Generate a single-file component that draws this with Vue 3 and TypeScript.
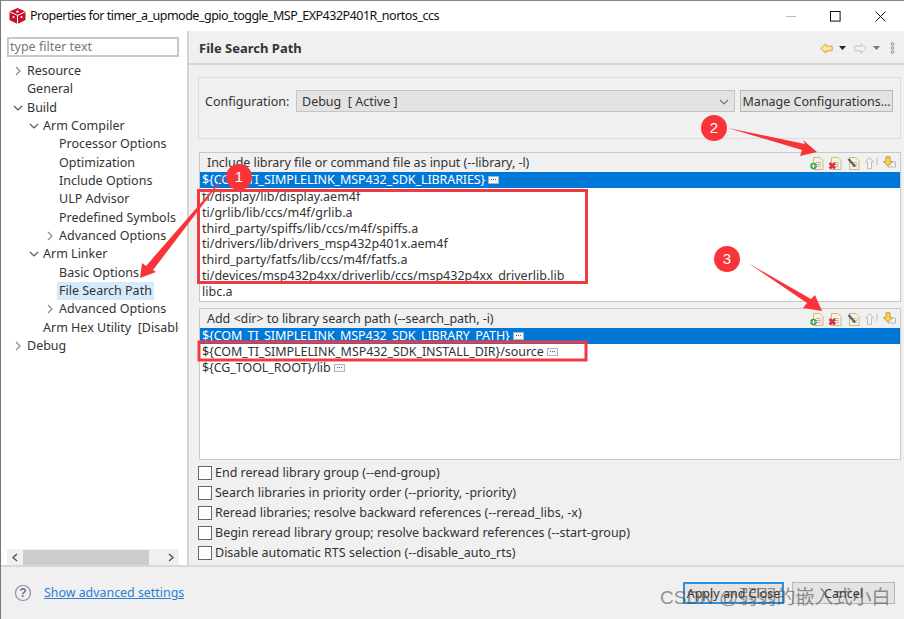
<script setup lang="ts">
interface TreeRow { label: string; depth: number; arrow?: 'right' | 'down'; selected?: boolean }
const tree: TreeRow[] = [
  { label: 'Resource', depth: 0, arrow: 'right' },
  { label: 'General', depth: 0 },
  { label: 'Build', depth: 0, arrow: 'down' },
  { label: 'Arm Compiler', depth: 1, arrow: 'down' },
  { label: 'Processor Options', depth: 2 },
  { label: 'Optimization', depth: 2 },
  { label: 'Include Options', depth: 2 },
  { label: 'ULP Advisor', depth: 2 },
  { label: 'Predefined Symbols', depth: 2 },
  { label: 'Advanced Options', depth: 2, arrow: 'right' },
  { label: 'Arm Linker', depth: 1, arrow: 'down' },
  { label: 'Basic Options', depth: 2 },
  { label: 'File Search Path', depth: 2, selected: true },
  { label: 'Advanced Options', depth: 2, arrow: 'right' },
  { label: 'Arm Hex Utility  [Disabled]', depth: 1 },
  { label: 'Debug', depth: 0, arrow: 'right' },
]
const libs = [
  'ti/display/lib/display.aem4f',
  'ti/grlib/lib/ccs/m4f/grlib.a',
  'third_party/spiffs/lib/ccs/m4f/spiffs.a',
  'ti/drivers/lib/drivers_msp432p401x.aem4f',
  'third_party/fatfs/lib/ccs/m4f/fatfs.a',
  'ti/devices/msp432p4xx/driverlib/ccs/msp432p4xx_driverlib.lib',
  'libc.a',
]
const checks = [
  'End reread library group (--end-group)',
  'Search libraries in priority order (--priority, -priority)',
  'Reread libraries; resolve backward references (--reread_libs, -x)',
  'Begin reread library group; resolve backward references (--start-group)',
  'Disable automatic RTS selection (--disable_auto_rts)',
]
const tools = ['add', 'del', 'edit', 'up', 'down']
const sections = [
  {
    cls: 'box1',
    head: 'Include library file or command file as input (--library, -l)',
    sel: '${COM_TI_SIMPLELINK_MSP432_SDK_LIBRARIES}',
    vars: [] as string[],
    plain: libs,
  },
  {
    cls: 'box2',
    head: 'Add <dir> to library search path (--search_path, -i)',
    sel: '${COM_TI_SIMPLELINK_MSP432_SDK_LIBRARY_PATH}',
    vars: ['${COM_TI_SIMPLELINK_MSP432_SDK_INSTALL_DIR}/source', '${CG_TOOL_ROOT}/lib'],
    plain: [] as string[],
  },
]
</script>

<template>
  <div class="win">
    <header class="titlebar">
      <svg class="logo" width="17" height="16" viewBox="0 0 17 16">
        <path d="M8.5 0 16.5 3.6V12L8.5 16 .5 12V3.6Z" fill="#c8102e" />
        <path d="M.8 3.8 8.5 7.4 16.2 3.8M8.5 7.4V16" stroke="#fff" stroke-width="1" fill="none" />
        <circle cx="8.5" cy="3.6" r="1.2" fill="#fff" />
        <circle cx="4.5" cy="9" r="1" fill="#fff" />
        <circle cx="12.5" cy="9" r="1" fill="#fff" />
      </svg>
      <span class="title">Properties for timer_a_upmode_gpio_toggle_MSP_EXP432P401R_nortos_ccs</span>
      <span class="spacer"></span>
      <span class="wbtn min"></span>
      <span class="wbtn"><svg width="11" height="11" viewBox="0 0 11 11"><rect x=".5" y=".5" width="9.6" height="9.6" fill="none" stroke="#111" /></svg></span>
      <span class="wbtn"><svg width="11" height="11" viewBox="0 0 11 11"><path d="M.5.5 10.5 10.5M10.5.5.5 10.5" stroke="#111" /></svg></span>
    </header>

    <div class="body">
      <aside class="side">
        <div class="filter">type filter text</div>
        <ul class="tree">
          <li v-for="(r, i) in tree" :key="i" class="node" :class="'d' + r.depth">
            <svg v-if="r.arrow" class="twist" width="10" height="10" viewBox="0 0 10 10">
              <path v-if="r.arrow === 'right'" d="M3 1 7 5 3 9" fill="none" stroke="#8a8a8a" stroke-width="1.2" />
              <path v-else d="M1 3 5 7 9 3" fill="none" stroke="#555" stroke-width="1.2" />
            </svg>
            <span class="nlabel" :class="{ sel: r.selected }">{{ r.label }}</span>
          </li>
        </ul>
        <div class="hscroll">
          <svg width="16" height="15" viewBox="0 0 16 15"><path d="M10 4 6 7.5 10 11" fill="none" stroke="#555" stroke-width="1.4" /></svg>
          <span class="thumb"></span>
          <svg width="16" height="15" viewBox="0 0 16 15"><path d="M6 4 10 7.5 6 11" fill="none" stroke="#555" stroke-width="1.4" /></svg>
        </div>
      </aside>

      <main class="main">
        <div class="pagehead">
          <h1>File Search Path</h1>
          <div class="nav">
            <svg width="13" height="11" viewBox="0 0 13 11"><path d="M.8 5.5 6 .8V3.2H12.2V7.8H6V10.2Z" fill="#fbe3a4" stroke="#d9a338" /></svg>
            <svg class="nav-drop" width="7" height="4" viewBox="0 0 7 4"><path d="M0 0H7L3.5 4Z" fill="#222" /></svg>
            <svg class="nav-fwd" width="13" height="11" viewBox="0 0 13 11"><path d="M12.2 5.5 7 .8V3.2H.8V7.8H7V10.2Z" fill="#f4f4f4" stroke="#c4c4c4" /></svg>
            <svg class="nav-drop" width="7" height="4" viewBox="0 0 7 4"><path d="M0 0H7L3.5 4Z" fill="#777" /></svg>
            <svg class="nav-menu" width="5" height="12" viewBox="0 0 5 12"><g fill="#ddd" stroke="#999"><circle cx="2.5" cy="2" r="1.4" /><circle cx="2.5" cy="6" r="1.4" /><circle cx="2.5" cy="10" r="1.4" /></g></svg>
          </div>
        </div>

        <div class="content">
          <section class="config">
            <span>Configuration:</span>
            <div class="combo">
              <span>Debug&nbsp;&nbsp;[ Active ]</span>
              <svg width="10" height="6" viewBox="0 0 10 6"><path d="M1 1 5 5 9 1" fill="none" stroke="#777" stroke-width="1.2" /></svg>
            </div>
            <button class="btn manage">Manage Configurations...</button>
          </section>

          <section v-for="s in sections" :key="s.cls" class="box" :class="s.cls">
            <div class="boxhead">
              <span>{{ s.head }}</span>
              <div class="tools">
                <svg v-for="k in tools" :key="k" width="14" height="14" viewBox="0 0 14 14">
                  <template v-if="k === 'add' || k === 'del' || k === 'edit'">
                    <path d="M3.5 1.5H10L13 4.5V13.5H3.5Z" fill="#fbf1d6" stroke="#cdb985" />
                    <path d="M6 6.5H11M6 8.5H11M6 10.5H11" stroke="#a9bdd2" />
                  </template>
                  <g v-if="k === 'add'"><circle cx="3.5" cy="10" r="3.2" fill="#3d9a4a" /><path d="M1.5 10H5.500M3.5 8V12" stroke="#fff" /></g>
                  <path v-if="k === 'del'" d="M1.5 7 7 12.500M7 7 1.5 12.500" stroke="#e0303f" stroke-width="2.8" />
                  <path v-if="k === 'edit'" d="M2.5 3 9 10.500" stroke="#5a5f68" stroke-width="2.2" />
                  <g v-if="k === 'up'"><path d="M5.5 1.5 9.5 6H7.500V12.500H3.5V6H1.5Z" fill="#f2f2f2" stroke="#bdbdbd" /><path d="M13 2V9" stroke="#bbb" /></g>
                  <g v-if="k === 'down'"><path d="M6 11H13.5V6H8" fill="#eef3f8" stroke="#a9bdd2" /><path d="M4 .8H8V5.5H10.500L6 10.500 1.5 5.5H4Z" fill="#f6cf5e" stroke="#d09a28" /></g>
                </svg>
              </div>
            </div>
            <div class="row sel"><span>{{ s.sel }}</span><i class="dots"></i></div>
            <div v-for="v in s.vars" :key="v" class="row"><span class="var">{{ v }}</span><i class="dots"></i></div>
            <div v-for="l in s.plain" :key="l" class="row">{{ l }}</div>
          </section>

          <div class="checks">
            <label v-for="c in checks" :key="c" class="check"><i class="cbox"></i>{{ c }}</label>
          </div>
        </div>
      </main>
    </div>

    <footer class="foot">
      <svg width="18" height="18" viewBox="0 0 18 18"><circle cx="9" cy="9" r="7.5" fill="none" stroke="#8090a8" stroke-width="1.2" /><text x="9" y="13" text-anchor="middle" font-size="12" font-family="Liberation Sans" font-weight="700" fill="#6a7385">?</text></svg>
      <a class="link">Show advanced settings</a>
      <span class="spacer"></span>
      <button class="btn apply">Apply and Close</button>
      <button class="btn cancel">Cancel</button>
    </footer>

    <svg class="marks" width="904" height="619" viewBox="0 0 904 619">
      <g fill="none" stroke="#ef3a40" stroke-width="3">
        <rect x="198.5" y="190.5" width="388" height="92" />
        <rect x="199" y="342" width="387" height="18" />
      </g>
      <g fill="#f9333a">
        <path d="M227 173 153 270 156 272 140 278 142 263 146 266Z" />
        <path d="M728 128 805 144 803 140 817 152 800 156 802 150Z" />
        <path d="M748 263 811 299 815 295 822 311 803 308 807 303Z" />
        <circle cx="239" cy="177" r="13" />
        <circle cx="714" cy="128" r="13" />
        <circle cx="727" cy="259" r="13" />
      </g>
      <g fill="#fff" font-family="Liberation Sans, sans-serif" font-size="15" text-anchor="middle">
        <text x="239" y="182">1</text>
        <text x="714" y="133">2</text>
        <text x="727" y="264">3</text>
      </g>
    </svg>
    <div class="wm">CSDN @弱弱的嵌入式小白</div>
  </div>
</template>

<style>
html, body { margin: 0; background: #f0f0f0; }
</style>

<style scoped>
.win { position: relative; width: 904px; height: 619px; overflow: hidden; box-sizing: border-box; border-left: 1px solid #777; border-top: 1px solid #888; display: flex; flex-direction: column; background: #f0f0f0; color: #333; font: 12.5px/16px "Noto Sans", "Noto Sans CJK SC", sans-serif; }
.titlebar { height: 30px; flex: none; background: #fff; display: flex; align-items: center; padding: 0 1px 0 8px; color: #111; }
.logo { margin-right: 4px; }
.title { letter-spacing: -.5px; font-size: 12.5px; white-space: nowrap; }
.spacer { flex: 1; }
.wbtn { width: 45px; height: 30px; display: flex; align-items: center; justify-content: center; }
.wbtn.min::after { content: ""; width: 10px; height: 1px; background: #bbb; }
.body { flex: 1; min-height: 0; display: flex; }
.side { flex: none; background: #fff; border-right: 2px solid #d4d4d4; padding: 6px 8px 0 6px; box-sizing: border-box; width: 188px; display: flex; flex-direction: column; }
.filter { height: 20px; box-sizing: border-box; border: 2px solid #c8c8c8; padding-left: 1px; line-height: 16px; color: #777; font-size: 12.5px; }
.tree { list-style: none; margin: 5px 0 0; padding: 0; flex: 1; overflow: hidden; }
.node { position: relative; height: 18.33px; line-height: 18px; white-space: pre; }
.d0 { padding-left: 20px; }
.d1 { padding-left: 36px; }
.d2 { padding-left: 52px; }
.twist { position: absolute; top: 4px; }
.d0 .twist { left: 6px; }
.d1 .twist { left: 22px; }
.d2 .twist { left: 38px; }
.nlabel { display: inline-block; height: 18px; }
.nlabel.sel { background: #d5ebfb; margin-left: -2px; padding: 0 2px; }
.hscroll { height: 16px; flex: none; background: #f0f0f0; display: flex; align-items: center; }
.thumb { width: 126px; height: 15px; background: #cdcdcd; }
.hscroll svg:last-child { margin-left: auto; }
.main { flex: 1; min-width: 0; display: flex; flex-direction: column; }
.pagehead { height: 30px; padding: 2px 9px 0 10px; flex: none; border-bottom: 2px solid #d4d4d4; display: flex; align-items: center; justify-content: space-between; }
.pagehead h1 { font-size: 13px; margin: 0; font-weight: 700; color: #333; }
.nav { display: flex; align-items: center; }
.nav-drop { margin-left: 6px; }
.nav-fwd { margin-left: 8px; }
.nav-menu { margin-left: 10px; }
.content { padding: 12px 3px 0 9px; flex: 1; min-height: 0; }
.config { height: 62px; box-sizing: border-box; border: 1px solid #dcdcdc; padding: 12px 7px 0 6px; display: flex; align-items: flex-start; }
.config > span { width: 91px; flex: none; line-height: 23px; }
.combo { width: 440px; height: 22px; box-sizing: border-box; background: #e3e3e3; border: 1px solid #c4c4c4; display: flex; align-items: center; justify-content: space-between; padding: 1px 5px 0; margin-right: 5px; white-space: nowrap; }
.btn { box-sizing: border-box; height: 22px; padding: 1px 0 0; background: #e3e3e3; border: 1px solid #b8b8b8; font: inherit; color: #333; }
.manage { width: 153px; }
.box { margin-left: 1px; background: #fff; border: 1px solid #c8c8c8; box-sizing: border-box; width: 702px; }
.box1 { height: 150px; margin-top: 13px; }
.box2 { height: 152px; margin-top: 6px; }
.boxhead { height: 18px; background: #f0f0f0; display: flex; align-items: center; justify-content: space-between; padding: 1px 4px 0 7px; white-space: nowrap; letter-spacing: -.05px; }
.tools { display: flex; gap: 4px; }
.row { height: 15.83px; line-height: 16px; padding-left: 2px; display: flex; align-items: center; gap: 3px; white-space: nowrap; }
.row.sel { background: #0078d7; color: #fff; height: 16px; letter-spacing: -.1px; }
.box1 .row.sel { margin-bottom: 1px; }
.var { letter-spacing: -.07px; }
.dots { position: relative; width: 11px; height: 8px; flex: none; box-sizing: border-box; border: 1px solid #a4b6cc; background: #f3f6fb; }
.dots::after { content: ""; position: absolute; left: 2px; top: 2px; width: 1px; height: 1px; background: #51617c; box-shadow: 2px 0 #51617c, 4px 0 #51617c; }
.checks { margin-top: 3px; }
.check { height: 20px; display: flex; align-items: center; white-space: nowrap; }
.cbox { width: 14px; height: 14px; box-sizing: border-box; border: 1px solid #666; background: #fff; margin-right: 3px; }
.foot { height: 54px; flex: none; border-top: 2px solid #d8d8d8; box-sizing: border-box; display: flex; align-items: center; padding: 0 9px 0 13px; background: #f0f0f0; }
.link { color: #2a7fd4; text-decoration: underline; margin-left: 12px; font-size: 12.4px; }
.apply { width: 101px; height: 22px; border: 2px solid #2d8fe0; margin-right: 8px; }
.cancel { width: 103px; height: 22px; }
.marks { position: absolute; left: -1px; top: -1px; pointer-events: none; }
.wm { position: absolute; left: 659px; top: 586px; font: 19px/22px "Liberation Sans", "Noto Sans CJK SC", sans-serif; color: rgba(80, 80, 80, .62); white-space: nowrap; }
</style>
